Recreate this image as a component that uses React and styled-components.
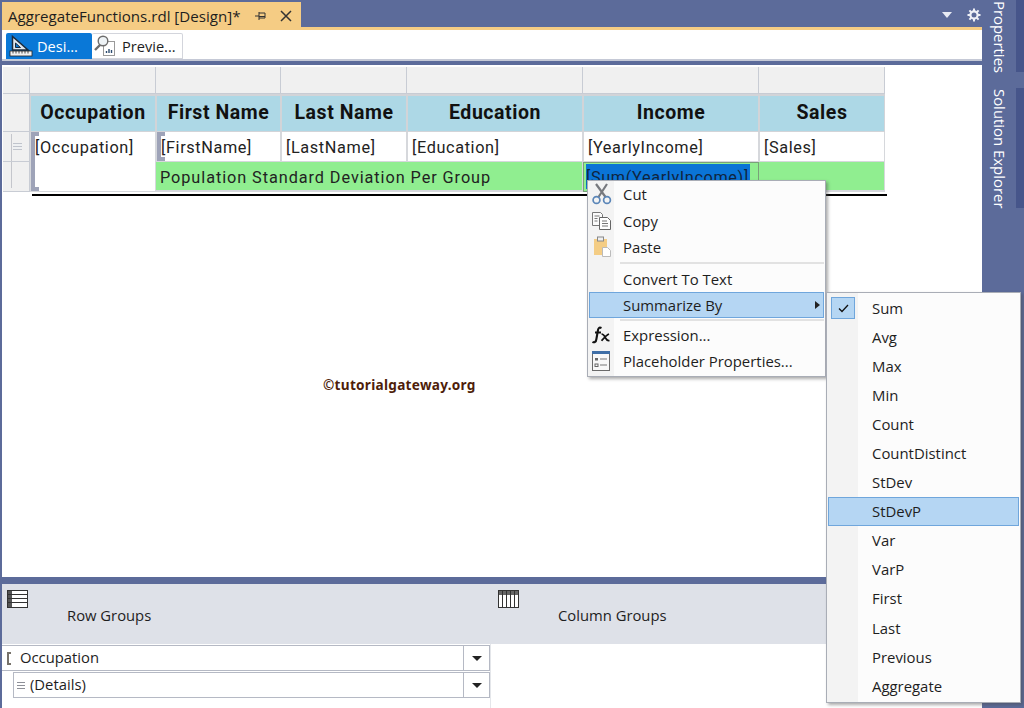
import React from "react"
import styled, { createGlobalStyle } from "styled-components"

const uiFont = `"Open Sans", "Noto Sans", sans-serif`
const dinFont = `"Roboto", "Liberation Sans", sans-serif`
const frameBlue = "#5c6b9a"
const hiBlue = "#b5d6f3"
const hiBorder = "#6fa6dc"

const Reset = createGlobalStyle`
  html, body { margin: 0; padding: 0; height: 100%; }
  body { width: 1024px; height: 708px; overflow: hidden; background: ${frameBlue}; }
`

const Page = styled.div`
  position: relative;
  width: 1024px;
  height: 708px;
  display: flex;
  font-family: ${uiFont};
  color: #1e1e1e;
  overflow: hidden;
  background: ${frameBlue};
`
const Main = styled.div`
  width: 980px;
  margin-left: 2px;
  display: flex;
  flex-direction: column;
`
const DocBar = styled.div`
  height: 27px;
  padding-top: 2px;
  box-sizing: border-box;
  display: flex;
  justify-content: space-between;
`
const DocTab = styled.div`
  width: 299px;
  background: #f5cc84;
  display: flex;
  align-items: center;
  padding: 2px 0 0 6px;
  box-sizing: border-box;
  font-size: 15.1px;
  white-space: nowrap;
`
const PinBtn = styled.span`
  margin-left: 15px;
  display: flex;
`
const CloseBtn = styled.span`
  margin-left: 13px;
  display: flex;
`
const DocTools = styled.div`
  display: flex;
  align-items: center;
  gap: 15px;
  padding-right: 1px;
`
const Toolbar = styled.div`
  height: 34px;
  box-sizing: border-box;
  border-top: 3px solid #f5cc84;
  border-bottom: 2px solid #c5c9d6;
  background: #fff;
  padding: 3px 0 0 4px;
  display: flex;
  align-items: flex-start;
`
const ViewTab = styled.div`
  height: 26px;
  box-sizing: border-box;
  display: flex;
  align-items: center;
  font-size: 14.6px;
  background: ${p => (p.$active ? "#0a78d7" : "#fff")};
  color: ${p => (p.$active ? "#fff" : "#1e1e1e")};
  width: ${p => p.$w}px;
  padding-left: ${p => (p.$active ? 3 : 2)}px;
  gap: ${p => (p.$active ? 4 : 6)}px;
  border: ${p => (p.$active ? "none" : "1px solid #d3d5dc")};
  border-left: none;
  border-radius: 2px 2px 0 0;
`
const Surface = styled.div`
  position: relative;
  flex: none;
  height: 512px;
  margin-top: 4px;
  background: #fff;
  padding: 2px 0 0 1px;
  box-sizing: border-box;
`
const ReportGrid = styled.div`
  display: grid;
  grid-template-columns: 27px 126px 125px 126px 176px 176px 126px;
  grid-template-rows: 27px 38px 30px 30px;
  width: 882px;
`
const TableRule = styled.div`
  margin: 2px 0 0 29px;
  width: 855px;
  height: 2px;
  background: #000;
`
const Handle = styled.div`
  background: #f0f0f0;
  border-right: 1px solid #c8ccd4;
  border-bottom: 1px solid #c8ccd4;
  box-sizing: border-box;
  position: relative;
`
const HeadCell = styled.div`
  background: #add8e6;
  border: 1px solid #d2d4d8;
  border-top-width: 2px;
  box-sizing: border-box;
  padding-bottom: 2px;
  display: flex;
  align-items: center;
  justify-content: center;
  font-family: ${dinFont};
  font-weight: 700;
  font-size: 19.5px;
  letter-spacing: 0.55px;
  color: #111;
  white-space: nowrap;
`
const DataCell = styled.div`
  background: #fff;
  border: 1px solid #d6d8dc;
  border-top: none;
  box-sizing: border-box;
  padding: 6px 0 0 4px;
  font-family: ${dinFont};
  font-size: 16.3px;
  letter-spacing: 0.62px;
  color: #222;
  position: relative;
  white-space: nowrap;
  grid-row: ${p => p.$rows || "auto"};
`
const GroupMark = styled.span`
  position: absolute;
  left: 0;
  top: 0;
  bottom: 0;
  width: 4px;
  background: #9ea3b8;
`
const MarkEnd = styled.span`
  position: absolute;
  left: 0;
  ${p => (p.$top ? "top: 0;" : "bottom: 0;")}
  width: 8px;
  height: 4px;
  background: #9ea3b8;
`
const TotalCell = styled.div`
  background: #90ee90;
  box-sizing: border-box;
  border-bottom: 2px solid #d6d8dc;
  border-right: 1px solid #d6d8dc;
  padding: 6px 0 0 4px;
  font-family: ${dinFont};
  font-size: 16.3px;
  letter-spacing: 0.92px;
  color: #222;
  white-space: nowrap;
  grid-column: ${p => p.$span || "auto"};
`
const SelectedCell = styled(TotalCell)`
  border: 1px solid #7aa07a;
  padding: 1px 0 0 2px;
  letter-spacing: 0.62px;
`
const SelectedText = styled.span`
  background: #0a74d6;
  color: #10253f;
  display: inline-block;
  height: 25px;
  line-height: 28px;
  overflow: hidden;
  padding: 0 1px 0 0;
`
const RowGlyph = styled.span`
  position: absolute;
  left: 10px;
  top: 11px;
  width: 9px;
  height: 7px;
  background: repeating-linear-gradient(#c0c4cc 0 1px, #eef0f2 1px 3px);
`
const GroupLine = styled.span`
  position: absolute;
  left: 8px;
  top: ${p => (p.$first ? 2 : 0)}px;
  bottom: ${p => (p.$first ? 0 : 3)}px;
  width: 2px;
  border-left: 1px solid #c4c6cc;
`
const Watermark = styled.div`
  position: absolute;
  left: 321px;
  top: 310px;
  font-family: "Noto Sans", sans-serif;
  font-weight: 700;
  font-size: 13.6px;
  letter-spacing: 0.28px;
  color: #4e1d0a;
  white-space: nowrap;
`
const Splitter = styled.div`
  height: 7px;
  flex: none;
`
const GroupPane = styled.div`
  flex: 1;
  background: #fff;
  display: grid;
  grid-template-columns: 489px 1fr;
  grid-template-rows: 60px 1fr;
`
const PaneHead = styled.div`
  background: #dee1e8;
  position: relative;
  padding: 21px 0 0 ${p => p.$pad}px;
  font-size: 14.8px;
  line-height: 20px;
`
const PaneIcon = styled.span`
  position: absolute;
  left: ${p => p.$left}px;
  top: 6px;
  display: flex;
`
const GroupList = styled.div`
  padding-top: 1px;
  display: flex;
  flex-direction: column;
  gap: 1px;
  border-right: 1px solid #e4e6ea;
`
const GroupRow = styled.div`
  height: 26px;
  margin-left: ${p => (p.$nested ? 11 : 0)}px;
  box-sizing: border-box;
  border: 1px solid #b5b9c4;
  border-left-width: ${p => (p.$nested ? 1 : 0)}px;
  display: flex;
  align-items: center;
  font-size: 14.8px;
  background: #fff;
`
const RowLabel = styled.span`
  flex: 1;
  display: flex;
  align-items: center;
  gap: 5px;
  padding: 0 0 2px 3px;
`
const BracketMark = styled.span`
  border: 2px solid #77726a;
  border-right: none;
  width: 2px;
  height: 9px;
  margin: 2px 4px 0 2px;
`
const LinesMark = styled.span`
  width: 8px;
  height: 7px;
  margin-top: 2px;
  background: repeating-linear-gradient(#8e9098 0 1px, #fff 1px 3px);
`
const DropBtn = styled.span`
  width: 25px;
  align-self: stretch;
  border-left: 1px solid #b5b9c4;
  display: flex;
  align-items: center;
  justify-content: center;
  &::before {
    content: "";
    border: 5px solid transparent;
    border-top: 5px solid #222;
    border-bottom: none;
  }
`
const Rail = styled.div`
  flex: 1;
  display: flex;
  flex-direction: column;
  gap: 16px;
`
const RailTab = styled.div`
  height: ${p => p.$h}px;
  box-sizing: border-box;
  padding: 1px 14px 0 0;
  writing-mode: vertical-rl;
  color: #fff;
  font-size: 14.9px;
  line-height: 20px;
  box-shadow: inset -8px 0 0 #46558a;
  white-space: nowrap;
`
const Menu = styled.div`
  position: absolute;
  background: #fcfcfc;
  border: 1px solid #a9adb6;
  box-shadow: 2px 2px 3px rgba(70, 70, 70, 0.45);
  box-sizing: border-box;
  z-index: 5;
  left: ${p => p.$left}px;
  top: ${p => p.$top}px;
  width: ${p => p.$w}px;
  height: ${p => p.$h}px;
  padding: 0 1px;
  &::before {
    content: "";
    position: absolute;
    left: 0;
    top: 0;
    bottom: 0;
    width: ${p => p.$gutter}px;
    background: #f3f3f3;
  }
`
const Item = styled.div`
  position: relative;
  box-sizing: border-box;
  height: ${p => p.$h}px;
  padding-left: ${p => p.$indent}px;
  display: flex;
  align-items: center;
  font-size: 14.9px;
  white-space: nowrap;
  color: #1e1e1e;
  background: ${p => (p.$hi ? hiBlue : "transparent")};
  outline: ${p => (p.$hi ? `1px solid ${hiBorder}` : "none")};
  outline-offset: -1px;
`
const ItemIcon = styled.span`
  position: absolute;
  left: 2px;
  top: 50%;
  transform: translateY(-50%);
  display: flex;
`
const Arrow = styled.span`
  position: absolute;
  right: 4px;
  top: 9px;
  border: 4.5px solid transparent;
  border-left: 5px solid #222;
  border-right: none;
`
const Sep = styled.div`
  position: relative;
  height: 2px;
  margin: ${p => p.$m} 0 ${p => p.$m} 31px;
  background: #e2e2e2;
`
const CheckBox = styled.span`
  position: absolute;
  left: 3px;
  top: 4px;
  width: 24px;
  height: 22px;
  box-sizing: border-box;
  background: ${hiBlue};
  border: 1px solid ${hiBorder};
  display: flex;
  align-items: center;
  justify-content: center;
`

const columns = ["Occupation", "First Name", "Last Name", "Education", "Income", "Sales"]
const summaries = ["Sum", "Avg", "Max", "Min", "Count", "CountDistinct", "StDev", "StDevP", "Var", "VarP", "First", "Last", "Previous", "Aggregate"]

function DesignIcon() {
  return (
    <svg width="24" height="22" viewBox="0 0 24 22">
      <path d="M3.5 1.5 L3.5 15 L19 15 Z" fill="#dfe7ef" stroke="#1c2a3a" strokeWidth="1.5" />
      <path d="M6.5 8 L6.5 12.5 L11.5 12.5 Z" fill="#0a78d7" stroke="#1c2a3a" />
      <rect x="1" y="16" width="22" height="5" fill="#f2f2f2" stroke="#222" strokeWidth="0.8" />
      <path d="M4 16v2.5M7 16v2.5M10 16v2.5M13 16v2.5M16 16v2.5M19 16v2.5" stroke="#222" strokeWidth="0.8" />
    </svg>
  )
}
function PreviewIcon() {
  return (
    <svg width="22" height="22" viewBox="0 0 22 22">
      <rect x="9.5" y="6.5" width="11" height="14" fill="#fff" stroke="#9a9a9a" />
      <path d="M12.5 18v-2M15 18v-4M17.5 18v-3" stroke="#2b4a6f" strokeWidth="1.4" />
      <circle cx="9" cy="6" r="4.8" fill="#eef3f6" stroke="#6d6d6d" strokeWidth="1.4" />
      <path d="M6 10 L1 15" stroke="#6d6d6d" strokeWidth="2.4" />
    </svg>
  )
}
function ScissorsIcon() {
  return (
    <svg width="22" height="22" viewBox="0 0 22 22">
      <path d="M5 1 L14.5 14 M16 1 L7.5 14" stroke="#77797e" strokeWidth="2.2" fill="none" />
      <circle cx="5.5" cy="17" r="3.4" fill="none" stroke="#5b86b8" strokeWidth="1.7" />
      <circle cx="16" cy="17" r="3.4" fill="none" stroke="#5b86b8" strokeWidth="1.7" />
    </svg>
  )
}
function CopyIcon() {
  return (
    <svg width="22" height="20" viewBox="0 0 22 20">
      <path d="M1.5 1.5h8l2 2v11h-10z" fill="#fafafa" stroke="#777" />
      <path d="M8.5 6.5h8l3 3v9h-11z" fill="#fff" stroke="#666" />
      <path d="M3.5 5h5M3.5 7.5h3M3.5 10h3M11 10h5M11 12.5h6M11 15h6" stroke="#777" />
    </svg>
  )
}
function PasteIcon() {
  return (
    <svg width="22" height="22" viewBox="0 0 22 22">
      <rect x="3" y="3" width="13" height="16" fill="#f4cd85" />
      <rect x="6.5" y="1" width="6" height="4" fill="#eee" stroke="#888" />
      <path d="M11.5 11.5h5l3 3v6h-8z" fill="#fff" stroke="#bbb" />
    </svg>
  )
}
function FxIcon() {
  return (
    <svg width="22" height="20" viewBox="0 0 22 20">
      <path d="M10.5 3 C8 1.8 7.2 3.5 6.8 6 L5.4 14 C5 17 3.5 18 1.5 16.8 M4 7.5 H10" stroke="#111" strokeWidth="2.1" fill="none" />
      <path d="M10.5 9 C13 9 13.5 11 14.5 13 C15.5 15 16.5 16 18.5 15.5 M18 9 C15.5 10 12.5 13.5 10.5 15.8" stroke="#111" strokeWidth="1.7" fill="none" />
    </svg>
  )
}
function PropsIcon() {
  return (
    <svg width="20" height="22" viewBox="0 0 20 22">
      <rect x="1.5" y="1.5" width="17" height="19" fill="#f8f8f8" stroke="#6a6a6a" />
      <rect x="1" y="1" width="18" height="3" fill="#3f6ea6" />
      <rect x="4" y="8" width="3" height="2.5" fill="#666" />
      <path d="M9 9h7M9 15h7" stroke="#777" />
      <rect x="4" y="14" width="3" height="2.5" fill="none" stroke="#666" />
    </svg>
  )
}
function RowGroupIcon() {
  return (
    <svg width="21" height="20" viewBox="0 0 21 20">
      <rect x="0.5" y="0.5" width="20" height="17" fill="#fff" stroke="#333" />
      <rect x="1" y="1" width="4" height="16" fill="#555" />
      <path d="M1 4.5h19M1 8.5h19M1 12.5h19" stroke="#333" />
    </svg>
  )
}
function ColGroupIcon() {
  return (
    <svg width="21" height="20" viewBox="0 0 21 20">
      <rect x="0.5" y="0.5" width="20" height="17" fill="#fff" stroke="#333" />
      <rect x="1" y="1" width="19" height="4" fill="#666" />
      <path d="M4.5 1v16M8.5 1v16M12.5 1v16M16.5 1v16" stroke="#333" />
    </svg>
  )
}

export default function App() {
  return (
    <Page>
      <Reset />
      <Main>
        <DocBar>
          <DocTab>
            AggregateFunctions.rdl [Design]*
            <PinBtn>
              <svg width="12" height="10" viewBox="0 0 12 10"><path d="M0 5h4M4 1v8M4 2h6v5H4M4 5.5h6" stroke="#333" fill="none" /></svg>
            </PinBtn>
            <CloseBtn>
              <svg width="12" height="12" viewBox="0 0 12 12"><path d="M1 1l10 10M11 1L1 11" stroke="#333" strokeWidth="1.5" /></svg>
            </CloseBtn>
          </DocTab>
          <DocTools>
            <svg width="10" height="6" viewBox="0 0 10 6"><path d="M0 0h10L5 6z" fill="#e8ebf4" /></svg>
            <svg width="14" height="14" viewBox="0 0 14 14">
              <circle cx="7" cy="7" r="3.6" fill="none" stroke="#eef0f6" strokeWidth="2.2" />
              <path d="M7 0.5v2.5M7 11v2.5M0.5 7H3M11 7h2.5M2.4 2.4l1.8 1.8M9.8 9.8l1.8 1.8M11.6 2.4L9.8 4.2M4.2 9.8l-1.8 1.8" stroke="#eef0f6" strokeWidth="2" />
            </svg>
          </DocTools>
        </DocBar>
        <Toolbar>
          <ViewTab $active $w={86}><DesignIcon />Desi...</ViewTab>
          <ViewTab $w={91}><PreviewIcon />Previe...</ViewTab>
        </Toolbar>
        <Surface>
          <ReportGrid>
            <Handle />
            {columns.map(c => <Handle key={c} />)}
            <Handle />
            {columns.map(c => <HeadCell key={c}>{c}</HeadCell>)}
            <Handle><GroupLine $first /><RowGlyph /></Handle>
            <DataCell $rows="span 2"><GroupMark /><MarkEnd $top />[Occupation]<MarkEnd /></DataCell>
            <DataCell><GroupMark /><MarkEnd $top />[FirstName]<MarkEnd /></DataCell>
            <DataCell>[LastName]</DataCell>
            <DataCell>[Education]</DataCell>
            <DataCell>[YearlyIncome]</DataCell>
            <DataCell>[Sales]</DataCell>
            <Handle><GroupLine /></Handle>
            <TotalCell $span="span 3">Population Standard Deviation Per Group</TotalCell>
            <SelectedCell><SelectedText>[Sum(YearlyIncome)]</SelectedText></SelectedCell>
            <TotalCell />
          </ReportGrid>
          <TableRule />
          <Watermark>©tutorialgateway.org</Watermark>
        </Surface>
        <Splitter />
        <GroupPane>
          <PaneHead $pad={65}><PaneIcon $left={5}><RowGroupIcon /></PaneIcon>Row Groups</PaneHead>
          <PaneHead $pad={67}><PaneIcon $left={7}><ColGroupIcon /></PaneIcon>Column Groups</PaneHead>
          <GroupList>
            <GroupRow><RowLabel><BracketMark />Occupation</RowLabel><DropBtn /></GroupRow>
            <GroupRow $nested><RowLabel><LinesMark />(Details)</RowLabel><DropBtn /></GroupRow>
          </GroupList>
          <div />
        </GroupPane>
      </Main>
      <Rail>
        <RailTab $h={72}>Properties</RailTab>
        <RailTab $h={120}>Solution Explorer</RailTab>
      </Rail>

      <Menu $left={587} $top={180} $w={239} $h={197} $gutter={26}>
        <Item $h={26} $indent={34}><ItemIcon><ScissorsIcon /></ItemIcon>Cut</Item>
        <Item $h={27} $indent={34}><ItemIcon><CopyIcon /></ItemIcon>Copy</Item>
        <Item $h={26} $indent={34}><ItemIcon><PasteIcon /></ItemIcon>Paste</Item>
        <Sep $m="2px" />
        <Item $h={26} $indent={34}>Convert To Text</Item>
        <Item $h={26} $hi $indent={34}>Summarize By<Arrow /></Item>
        <Sep $m="1px" />
        <Item $h={26} $indent={34}><ItemIcon><FxIcon /></ItemIcon>Expression...</Item>
        <Item $h={26} $indent={34}><ItemIcon><PropsIcon /></ItemIcon>Placeholder Properties...</Item>
      </Menu>

      <Menu $left={826} $top={292} $w={195} $h={411} $gutter={31}>
        {summaries.map(s => (
          <Item key={s} $h={29.1} $indent={44} $hi={s === "StDevP"}>
            {s === "Sum" && (
              <CheckBox>
                <svg width="11" height="9" viewBox="0 0 11 9"><path d="M1 4.5l3 3L10 1" stroke="#111" strokeWidth="1.3" fill="none" /></svg>
              </CheckBox>
            )}
            {s}
          </Item>
        ))}
      </Menu>
    </Page>
  )
}
